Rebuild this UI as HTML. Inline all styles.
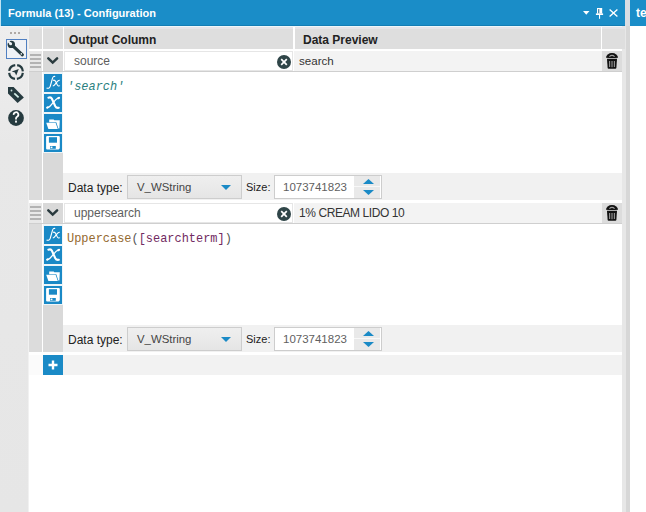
<!DOCTYPE html>
<html><head><meta charset="utf-8">
<style>
html,body{margin:0;padding:0;}
body{width:646px;height:512px;position:relative;overflow:hidden;background:#fff;font-family:"Liberation Sans",sans-serif;}
.a{position:absolute;}
.t{position:absolute;white-space:nowrap;line-height:1;}
svg{position:absolute;overflow:visible;}
</style></head><body>

<!-- title bar -->
<div class="a" style="left:0;top:0;width:625px;height:26px;background:#1a8dc8;"></div>
<div class="a" style="left:0;top:0;width:1px;height:26px;background:#bfe3f3;"></div>
<div class="a" style="left:1px;top:25px;width:624px;height:1px;background:#137db5;"></div>
<div class="t" style="left:8px;top:8px;font-size:11px;font-weight:bold;color:#fff;">Formula (13) - Configuration</div>
<!-- title icons -->
<svg style="left:583px;top:11px" width="7" height="4"><path d="M0 0H6.5L3.25 3.8Z" fill="#fff"/></svg>
<svg style="left:595px;top:8px" width="9" height="12"><rect x="2" y="0" width="5.2" height="5.6" fill="#fff"/><rect x="3.2" y="1.1" width="1.1" height="4.5" fill="#2a6f93"/><rect x="0.9" y="5.4" width="7.2" height="1.6" fill="#fff"/><rect x="4" y="7" width="1.1" height="3.8" fill="#fff"/></svg>
<svg style="left:609px;top:9px" width="9" height="8"><path d="M0.6 0.4L8.4 7.6M8.4 0.4L0.6 7.6" stroke="#fff" stroke-width="1.35"/></svg>

<!-- right divider & other tab -->
<div class="a" style="left:625px;top:0;width:5px;height:26px;background:#d9dde3;"></div>
<div class="a" style="left:630px;top:0;width:16px;height:26px;background:#1a8dc8;"></div>
<div class="t" style="left:636px;top:6.5px;font-size:12px;font-weight:bold;color:#fff;">te</div>
<div class="a" style="left:622px;top:26px;width:4px;height:486px;background:#e7e7e7;"></div>
<div class="a" style="left:626px;top:26px;width:4px;height:486px;background:#d7d7d7;"></div>

<!-- left toolbar -->
<div class="a" style="left:0;top:26px;width:29px;height:486px;background:linear-gradient(#eeeeee,#e8e8e8 120px,#e6e6e6);"></div>
<div class="a" style="left:0;top:26px;width:622px;height:1px;background:#eef6fa;"></div>
<div class="a" style="left:10px;top:32px;width:2px;height:2px;background:#b0aaa5;"></div>
<div class="a" style="left:14px;top:32px;width:2px;height:2px;background:#b0aaa5;"></div>
<div class="a" style="left:18px;top:32px;width:2px;height:2px;background:#b0aaa5;"></div>
<div class="a" style="left:6px;top:39px;width:19px;height:18px;border:1px solid #5080c2;background:#eff2f6;"></div>
<!-- wrench -->
<svg style="left:0;top:0" width="30" height="130">
 <g fill="#263b40">
  <circle cx="11.3" cy="44.4" r="3.7"/>
  <line x1="11.3" y1="44.4" x2="22.4" y2="54.8" stroke="#263b40" stroke-width="3.1" stroke-linecap="round"/>
 </g>
 <circle cx="10.6" cy="43.7" r="1.5" fill="#eff2f6"/>
 <path d="M11.3 43L8.9 40.6 7.5 42 9.9 44.4Z" fill="#eff2f6"/>
 <circle cx="21.3" cy="53.9" r="0.8" fill="#eff2f6"/>
 <!-- target -->
 <circle cx="16" cy="72" r="6.9" stroke="#263b40" stroke-width="2.2" fill="none" stroke-dasharray="8.84 2" stroke-dashoffset="-1"/>
 <path d="M18.8 69L11.7 71.6 14.9 72.6 16.2 75.6Z" fill="#263b40"/>
 <!-- tag -->
 <path d="M8 87H13.6L23.9 97.4 17.6 103 8 93.4Z" fill="#263b40"/>
 <circle cx="11.5" cy="90.5" r="0.9" fill="#cfe3e0"/>
 <path d="M14.3 93.3L18.6 97.4" stroke="#d6efe9" stroke-width="1.7"/>
 <!-- help -->
 <circle cx="16" cy="118" r="7.9" fill="#263b40"/>
 <path d="M13.7 114.9A2.35 2.35 0 1 1 17.1 116.7C16.4 117.1 16 117.5 16 118.4V119.5" stroke="#fff" stroke-width="1.75" fill="none"/>
 <rect x="15.1" y="120.6" width="1.8" height="2" fill="#fff"/>
</svg>
<div class="a" style="left:28px;top:27px;width:1px;height:485px;background:#f1f1f1;"></div>

<!-- header -->
<div class="a" style="left:29px;top:27px;width:596px;height:22px;background:#dedede;"></div>
<div class="a" style="left:29px;top:27px;width:596px;height:2px;background:#e5e4e9;"></div>
<div class="a" style="left:42px;top:27px;width:1px;height:22px;background:#fff;"></div>
<div class="a" style="left:63px;top:27px;width:1px;height:22px;background:#fff;"></div>
<div class="a" style="left:293px;top:27px;width:2px;height:22px;background:#fff;"></div>
<div class="a" style="left:601px;top:27px;width:1px;height:22px;background:#fff;"></div>
<div class="t" style="left:69px;top:34px;font-size:12px;font-weight:bold;color:#222;">Output Column</div>
<div class="t" style="left:303px;top:34px;font-size:12px;font-weight:bold;color:#222;">Data Preview</div>
<div class="a" style="left:29px;top:49px;width:593px;height:2px;background:#fff;"></div>

<!-- ROW 1 -->

<div class="a" style="left:0;top:51px;width:646px;height:152px;">
 <!-- strip -->
 <div class="a" style="left:29px;top:0;width:13px;height:20px;background:#e8e8e8;"></div>
 <div class="a" style="left:30px;top:3px;width:11px;height:2px;background:#b3b3b3;"></div>
 <div class="a" style="left:30px;top:7px;width:11px;height:2px;background:#b3b3b3;"></div>
 <div class="a" style="left:30px;top:11px;width:11px;height:2px;background:#b3b3b3;"></div>
 <div class="a" style="left:30px;top:15px;width:11px;height:2px;background:#b3b3b3;"></div>
 <div class="a" style="left:43px;top:0;width:20px;height:20px;background:#d9d9d9;"></div>
 <svg style="left:47px;top:6px" width="13" height="8" viewBox="0 0 13 8"><path d="M1.3 1.3L5.7 5.6 10.1 1.3" stroke="#2a3a3e" stroke-width="2.5" fill="none" stroke-linecap="round"/></svg>
 <div class="a" style="left:64px;top:0;width:229px;height:20px;background:#fff;box-shadow:inset 0 0 0 1px #e6e6e6;"></div>
 <div class="t" style="left:74px;top:4px;font-size:12px;color:#5e5e5e;">source</div>
 <svg style="left:277px;top:3.5px" width="14" height="14" viewBox="0 0 14 14"><circle cx="7" cy="7" r="7" fill="#2f4548"/><path d="M4.2 4.2L9.8 9.8M9.8 4.2L4.2 9.8" stroke="#fff" stroke-width="1.7"/></svg>
 <div class="a" style="left:294px;top:0;width:308px;height:20px;background:#f3f3f3;"></div>
 <div class="t" style="left:299px;top:4px;font-size:11.6px;color:#333;">search</div>
 <div class="a" style="left:602px;top:0;width:20px;height:20px;background:#dcdcdc;"></div>
 <svg style="left:602px;top:0" width="20" height="20" viewBox="0 0 20 20"><path d="M4 6.8A6 4.7 0 0 1 16 6.8Q10 7.4 4 6.8Z" fill="#111"/><path d="M7.4 5.6Q10 3 12.6 5.6" stroke="#a0a0a0" stroke-width="1.1" fill="none"/><path d="M5 7.8H15L14.4 16.8Q14.3 17.7 13.4 17.7H6.6Q5.7 17.7 5.6 16.8Z" fill="#111"/><path d="M7.6 10V16M10 10V16.2M12.4 10V16" stroke="#8f8f8f" stroke-width="1.2"/></svg>
 <div class="a" style="left:29px;top:20px;width:593px;height:1px;background:#cfcfcf;"></div>
 <!-- content -->
 <div class="a" style="left:29px;top:21px;width:13px;height:128px;background:#dcdcdc;"></div>
 <div class="a" style="left:43px;top:21px;width:20px;height:128px;background:#d9d9d9;"></div>
 <div class="a" style="left:43px;top:21px;width:20px;height:81px;background:#eef5f8;"></div>
 <!-- ic -->
 <svg style="left:0;top:0" width="70" height="152"><g transform="translate(0,-51)">
  <rect x="44" y="74" width="18" height="18" fill="#1a89c6"/>
  <path d="M55.2 76.6Q53.2 75.6 52.4 78.6L50.3 86.2Q49.6 88.9 46.6 88.1" stroke="#fff" stroke-width="1.15" fill="none"/>
  <path d="M53 80.4Q54.6 79.6 55.6 81.6L57.4 85Q58.3 86.6 60 85.6M59.8 80.2Q58.4 80 56.6 82.4L55 84.4Q54 85.8 52.8 86" stroke="#fff" stroke-width="1.1" fill="none"/>
  <rect x="44" y="94" width="18" height="18" fill="#1a89c6"/>
  <path d="M48.4 97.7Q50.9 96.7 51.9 98.7L55.3 106.3Q56.3 108.3 58.8 107.8" stroke="#fff" stroke-width="2.1" fill="none" stroke-linecap="round"/>
  <path d="M59.2 97.9Q57.6 97.8 55.8 99.7L50.2 106Q49 107.4 47.2 107.6" stroke="#fff" stroke-width="1.2" fill="none"/>
  <ellipse cx="58.7" cy="98" rx="1.5" ry="1.1" fill="#fff" transform="rotate(-25 58.7 98)"/>
  <ellipse cx="47.5" cy="107.4" rx="1.5" ry="1.1" fill="#fff" transform="rotate(-25 47.5 107.4)"/>
  <rect x="44" y="114" width="18" height="18" fill="#1a89c6"/>
  <path d="M49.2 122.2V119.5H53.6L54.4 120.3H59.8L59.4 128.6H58.3L56.3 122.2Z" fill="#fff"/>
  <path d="M46.2 122.8H55.6L57.8 128.9H48.4Z" fill="#fff"/>
  <rect x="44" y="134" width="18" height="18" fill="#1a89c6"/>
  <path d="M47.2 136H58.7Q59.8 136 59.8 137.1V148.2L58.6 149.6H47.2Q46.1 149.6 46.1 148.5V137.1Q46.1 136 47.2 136Z" fill="#fff"/>
  <rect x="48.9" y="137.2" width="8.1" height="5.5" fill="#1a89c6"/>
  <rect x="50" y="146" width="5.8" height="2.8" fill="#1a89c6"/>
  <rect x="50.6" y="146.6" width="1.8" height="1.6" fill="#fff"/>
 </g></svg>
 <div class="a" style="left:63px;top:21px;width:559px;height:101px;background:#fff;"></div>
 <div class="t" style="left:67px;top:31px;font-family:'Liberation Mono',monospace;font-size:11.95px;"><span style="color:#2b7f80;font-style:italic">'search'</span></div>
 <!-- data type panel -->
 <div class="a" style="left:63px;top:122px;width:559px;height:27px;background:#f1f1f1;"></div>
 <div class="t" style="left:68px;top:131px;font-size:12px;color:#222;">Data type:</div>
 <div class="a" style="left:127px;top:124px;width:113px;height:22px;border:1px solid #cdcdcd;background:linear-gradient(#efefef,#e5e5e5);"></div>
 <div class="t" style="left:137px;top:131px;font-size:11.4px;color:#444;">V_WString</div>
 <svg style="left:221px;top:134px" width="10" height="5"><path d="M0 0H10L5 5Z" fill="#1a8ac6"/></svg>
 <div class="t" style="left:246px;top:131px;font-size:11px;color:#222;">Size:</div>
 <div class="a" style="left:274px;top:124px;width:106px;height:22px;border:1px solid #cdcdcd;background:#fff;"></div>
 <div class="t" style="left:283px;top:131px;font-size:11.5px;color:#5f5f5f;">1073741823</div>
 <div class="a" style="left:354px;top:125px;width:26px;height:22px;background:#e9e9e9;"></div>
 <div class="a" style="left:354px;top:135px;width:26px;height:1px;background:#f8f8f8;"></div>
 <svg style="left:363px;top:128px" width="11" height="5"><path d="M0 5H11L5.5 0Z" fill="#1a8ac6"/></svg>
 <svg style="left:363px;top:139px" width="11" height="5"><path d="M0 0H11L5.5 5Z" fill="#1a8ac6"/></svg>
 <div class="a" style="left:29px;top:149px;width:593px;height:3px;background:#fff;"></div>
</div>

<div class="a" style="left:0;top:203px;width:646px;height:152px;">
 <!-- strip -->
 <div class="a" style="left:29px;top:0;width:13px;height:20px;background:#e8e8e8;"></div>
 <div class="a" style="left:30px;top:3px;width:11px;height:2px;background:#b3b3b3;"></div>
 <div class="a" style="left:30px;top:7px;width:11px;height:2px;background:#b3b3b3;"></div>
 <div class="a" style="left:30px;top:11px;width:11px;height:2px;background:#b3b3b3;"></div>
 <div class="a" style="left:30px;top:15px;width:11px;height:2px;background:#b3b3b3;"></div>
 <div class="a" style="left:43px;top:0;width:20px;height:20px;background:#d9d9d9;"></div>
 <svg style="left:47px;top:6px" width="13" height="8" viewBox="0 0 13 8"><path d="M1.3 1.3L5.7 5.6 10.1 1.3" stroke="#2a3a3e" stroke-width="2.5" fill="none" stroke-linecap="round"/></svg>
 <div class="a" style="left:64px;top:0;width:229px;height:20px;background:#fff;box-shadow:inset 0 0 0 1px #e6e6e6;"></div>
 <div class="t" style="left:74px;top:4px;font-size:12px;color:#5e5e5e;">uppersearch</div>
 <svg style="left:277px;top:3.5px" width="14" height="14" viewBox="0 0 14 14"><circle cx="7" cy="7" r="7" fill="#2f4548"/><path d="M4.2 4.2L9.8 9.8M9.8 4.2L4.2 9.8" stroke="#fff" stroke-width="1.7"/></svg>
 <div class="a" style="left:294px;top:0;width:308px;height:20px;background:#f3f3f3;"></div>
 <div class="t" style="left:299px;top:4px;font-size:12px;letter-spacing:-0.42px;color:#333;">1% CREAM LIDO 10</div>
 <div class="a" style="left:602px;top:0;width:20px;height:20px;background:#dcdcdc;"></div>
 <svg style="left:602px;top:0" width="20" height="20" viewBox="0 0 20 20"><path d="M4 6.8A6 4.7 0 0 1 16 6.8Q10 7.4 4 6.8Z" fill="#111"/><path d="M7.4 5.6Q10 3 12.6 5.6" stroke="#a0a0a0" stroke-width="1.1" fill="none"/><path d="M5 7.8H15L14.4 16.8Q14.3 17.7 13.4 17.7H6.6Q5.7 17.7 5.6 16.8Z" fill="#111"/><path d="M7.6 10V16M10 10V16.2M12.4 10V16" stroke="#8f8f8f" stroke-width="1.2"/></svg>
 <div class="a" style="left:29px;top:20px;width:593px;height:1px;background:#cfcfcf;"></div>
 <!-- content -->
 <div class="a" style="left:29px;top:21px;width:13px;height:128px;background:#dcdcdc;"></div>
 <div class="a" style="left:43px;top:21px;width:20px;height:128px;background:#d9d9d9;"></div>
 <div class="a" style="left:43px;top:21px;width:20px;height:81px;background:#eef5f8;"></div>
 <!-- ic -->
 <svg style="left:0;top:0" width="70" height="152"><g transform="translate(0,-51)">
  <rect x="44" y="74" width="18" height="18" fill="#1a89c6"/>
  <path d="M55.2 76.6Q53.2 75.6 52.4 78.6L50.3 86.2Q49.6 88.9 46.6 88.1" stroke="#fff" stroke-width="1.15" fill="none"/>
  <path d="M53 80.4Q54.6 79.6 55.6 81.6L57.4 85Q58.3 86.6 60 85.6M59.8 80.2Q58.4 80 56.6 82.4L55 84.4Q54 85.8 52.8 86" stroke="#fff" stroke-width="1.1" fill="none"/>
  <rect x="44" y="94" width="18" height="18" fill="#1a89c6"/>
  <path d="M48.4 97.7Q50.9 96.7 51.9 98.7L55.3 106.3Q56.3 108.3 58.8 107.8" stroke="#fff" stroke-width="2.1" fill="none" stroke-linecap="round"/>
  <path d="M59.2 97.9Q57.6 97.8 55.8 99.7L50.2 106Q49 107.4 47.2 107.6" stroke="#fff" stroke-width="1.2" fill="none"/>
  <ellipse cx="58.7" cy="98" rx="1.5" ry="1.1" fill="#fff" transform="rotate(-25 58.7 98)"/>
  <ellipse cx="47.5" cy="107.4" rx="1.5" ry="1.1" fill="#fff" transform="rotate(-25 47.5 107.4)"/>
  <rect x="44" y="114" width="18" height="18" fill="#1a89c6"/>
  <path d="M49.2 122.2V119.5H53.6L54.4 120.3H59.8L59.4 128.6H58.3L56.3 122.2Z" fill="#fff"/>
  <path d="M46.2 122.8H55.6L57.8 128.9H48.4Z" fill="#fff"/>
  <rect x="44" y="134" width="18" height="18" fill="#1a89c6"/>
  <path d="M47.2 136H58.7Q59.8 136 59.8 137.1V148.2L58.6 149.6H47.2Q46.1 149.6 46.1 148.5V137.1Q46.1 136 47.2 136Z" fill="#fff"/>
  <rect x="48.9" y="137.2" width="8.1" height="5.5" fill="#1a89c6"/>
  <rect x="50" y="146" width="5.8" height="2.8" fill="#1a89c6"/>
  <rect x="50.6" y="146.6" width="1.8" height="1.6" fill="#fff"/>
 </g></svg>
 <div class="a" style="left:63px;top:21px;width:559px;height:101px;background:#fff;"></div>
 <div class="t" style="left:67px;top:31px;font-family:'Liberation Mono',monospace;font-size:11.95px;"><span style="color:#94692f">Uppercase</span><span style="color:#555">(</span><span style="color:#722a62">[searchterm]</span><span style="color:#555">)</span></div>
 <!-- data type panel -->
 <div class="a" style="left:63px;top:122px;width:559px;height:27px;background:#f1f1f1;"></div>
 <div class="t" style="left:68px;top:131px;font-size:12px;color:#222;">Data type:</div>
 <div class="a" style="left:127px;top:124px;width:113px;height:22px;border:1px solid #cdcdcd;background:linear-gradient(#efefef,#e5e5e5);"></div>
 <div class="t" style="left:137px;top:131px;font-size:11.4px;color:#444;">V_WString</div>
 <svg style="left:221px;top:134px" width="10" height="5"><path d="M0 0H10L5 5Z" fill="#1a8ac6"/></svg>
 <div class="t" style="left:246px;top:131px;font-size:11px;color:#222;">Size:</div>
 <div class="a" style="left:274px;top:124px;width:106px;height:22px;border:1px solid #cdcdcd;background:#fff;"></div>
 <div class="t" style="left:283px;top:131px;font-size:11.5px;color:#5f5f5f;">1073741823</div>
 <div class="a" style="left:354px;top:125px;width:26px;height:22px;background:#e9e9e9;"></div>
 <div class="a" style="left:354px;top:135px;width:26px;height:1px;background:#f8f8f8;"></div>
 <svg style="left:363px;top:128px" width="11" height="5"><path d="M0 5H11L5.5 0Z" fill="#1a8ac6"/></svg>
 <svg style="left:363px;top:139px" width="11" height="5"><path d="M0 0H11L5.5 5Z" fill="#1a8ac6"/></svg>
 <div class="a" style="left:29px;top:149px;width:593px;height:3px;background:#fff;"></div>
</div>

<!-- add row -->
<div class="a" style="left:29px;top:355px;width:593px;height:20px;background:#f2f2f2;"></div>
<div class="a" style="left:29px;top:355px;width:14px;height:20px;background:#fbfbfb;"></div>
<div class="a" style="left:43px;top:355px;width:20px;height:20px;background:#1a8ac6;"></div>
<svg style="left:48px;top:360px" width="10" height="10"><path d="M5 0.5V9.5M0.5 5H9.5" stroke="#fff" stroke-width="2.4"/></svg>


</body></html>
